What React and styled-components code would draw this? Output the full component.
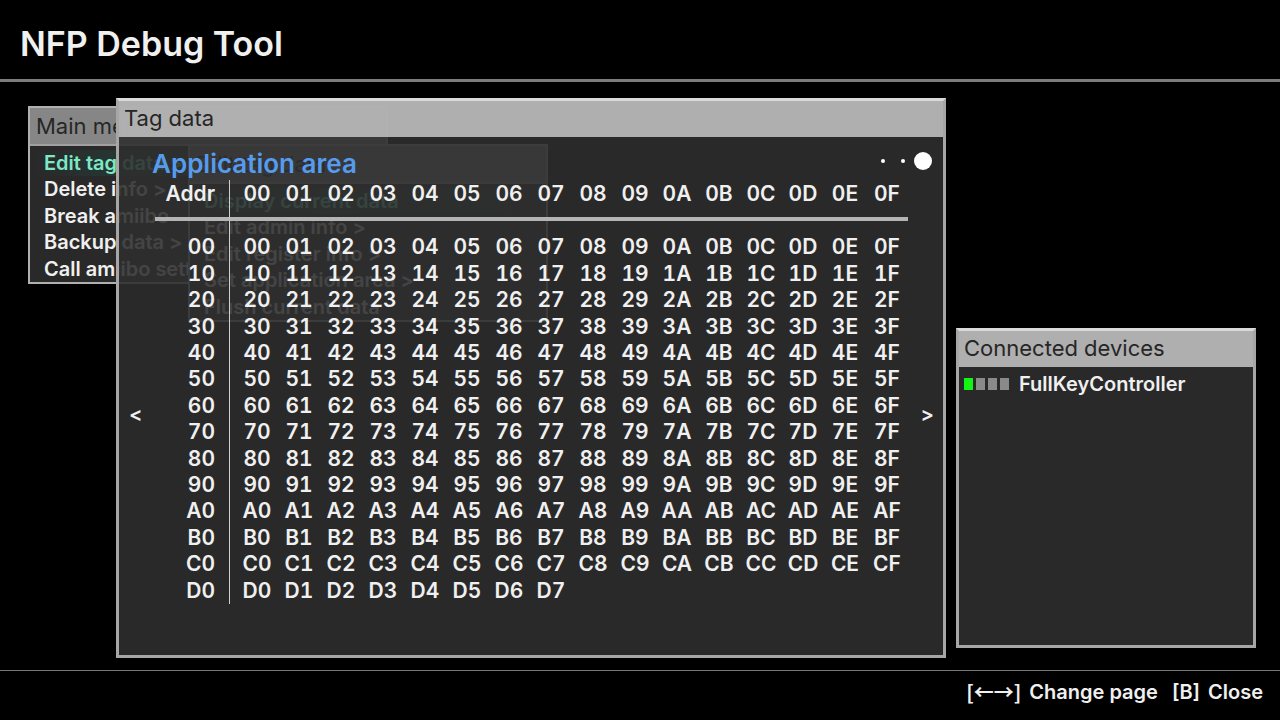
import React from "react";
import styled, { createGlobalStyle } from "styled-components";

const GlobalStyle = createGlobalStyle`
  *, *::before, *::after { box-sizing: border-box; }
  body {
    margin: 0;
    background: #000;
    color: #f0f0f0;
    font-family: Inter, "Noto Sans CJK JP", sans-serif;
    font-size: 20px;
    font-weight: 600;
    line-height: 26px;
  }
`;

const Screen = styled.div`
  min-height: 100vh;
  display: grid;
  grid-template-rows: auto 1fr auto;
`;

const AppHeader = styled.header`
  padding: 19px 20px 10px;
  border-bottom: 3px solid #7c7c7c;
`;

const AppTitle = styled.h1`
  margin: 0;
  font-size: 34px;
  font-weight: 600;
  line-height: 50px;
`;

const Desktop = styled.main`
  position: relative;
  display: flex;
  gap: 10px;
  padding: 16px 24px 12px 116px;
`;

const Panel = styled.section`
  display: flex;
  flex-direction: column;
  border: 3px solid #a6a6a6;
  border-top-color: #dadada;
  background: ${(p) => (p.$dim ? "#292929" : "rgba(46, 46, 46, 0.89)")};
  background-clip: padding-box;
`;

const MenuWindow = styled(Panel)`
  position: absolute;
  left: ${(p) => p.$left}px;
  top: ${(p) => p.$top}px;
  width: 360px;
  height: 178px;
  border-color: #b0b0b0;
  border-width: 2px;
`;

const TagWindow = styled(Panel)`
  position: relative;
  flex: 1;
`;

const DeviceWindow = styled(Panel)`
  position: relative;
  width: 300px;
  height: 320px;
  align-self: flex-end;
  margin-bottom: 10px;
`;

const PanelTitle = styled.h2`
  flex: none;
  height: 36px;
  margin: 0;
  padding: ${(p) => (p.$dim ? "4px 6px" : "3px 5px")};
  color: #262626;
  font-size: 22px;
  font-weight: 400;
  line-height: 28px;
  background: ${(p) => (p.$dim ? "#868686" : "rgba(190, 190, 190, 0.9)")};
`;

const MenuList = styled.ul`
  flex: 1;
  display: grid;
  grid-auto-rows: 1fr;
  margin: 0;
  padding: 4px 5px 0;
  border-top: 2px solid #a0a0a0;
  list-style: none;
`;

const MenuButton = styled.button`
  display: block;
  width: 100%;
  padding: 0 9px;
  border: 0;
  background: ${(p) => (p.$selected ? "linear-gradient(90deg, #292929, #23403a 40%, #292929)" : "none")};
  color: ${(p) => (p.$selected ? "#7ce8c6" : "#f0f0f0")};
  font: inherit;
  text-align: left;
  white-space: nowrap;
`;

const PageBar = styled.div`
  display: flex;
  align-items: center;
  justify-content: space-between;
  height: 43px;
  padding: 4px 11px 0 33px;
`;

const PageTitle = styled.h3`
  margin: 0;
  padding-top: 6px;
  color: #569bee;
  font-size: 26px;
  font-weight: 600;
  line-height: 32px;
`;

const Dots = styled.div`
  display: flex;
  align-items: center;
`;

const Dot = styled.span`
  width: ${(p) => (p.$current ? 18 : 4)}px;
  height: ${(p) => (p.$current ? 18 : 4)}px;
  margin-left: ${(p) => (p.$current ? 9 : 16)}px;
  border-radius: 50%;
  background: #fff;
`;

const PageBody = styled.div`
  flex: 1;
  display: grid;
  grid-template-columns: 36px 1fr 35px;
  align-items: start;
`;

const PageArrow = styled.button`
  align-self: center;
  padding: 0 9px 8px 10px;
  border: 0;
  background: none;
  color: #f0f0f0;
  font: inherit;
  text-align: ${(p) => p.$side};
`;

const HexTable = styled.table`
  width: 100%;
  table-layout: fixed;
  border-collapse: separate;
  border-spacing: 0;
  font-size: 21px;
  font-variant-numeric: tabular-nums;

  th, td { padding: 0; font-weight: 600; text-align: center; }
  th:first-child {
    padding-right: 14px;
    text-align: right;
    border-right: 1px solid #d0d0d0;
  }
  th:nth-child(2), td:nth-child(2) { padding-left: 6px; }
`;

const AddrCol = styled.col`
  width: 75px;
`;

const FirstCol = styled.col`
  width: 48px;
`;

const HeadRow = styled.tr`
  height: 41px;
  th { padding-bottom: 10px; border-bottom: 4px solid #b4b4b4; }
`;

const GapRow = styled.tr`
  height: 13px;
`;

const HexRow = styled.tr`
  height: ${(p) => (p.$tall ? 27 : 26)}px;
`;

const DeviceRow = styled.div`
  display: flex;
  align-items: center;
  gap: 10px;
  padding: 4px 5px;
`;

const Signal = styled.div`
  display: flex;
  gap: 3px;
`;

const SignalBar = styled.span`
  width: 9px;
  height: 12px;
  background: ${(p) => (p.$on ? "#14f514" : "#8a8a8a")};
`;

const KeyBar = styled.footer`
  display: flex;
  justify-content: flex-end;
  gap: 14px;
  height: 50px;
  padding: 8px 17px 0;
  border-top: 1px solid #787878;
`;

const KeyButton = styled.button`
  display: flex;
  gap: 8px;
  height: 26px;
  padding: 0;
  border: 0;
  background: none;
  color: #f0f0f0;
  font: inherit;
`;

const ArrowKeys = styled.kbd`
  font-family: "Noto Sans CJK JP", sans-serif;
  font-weight: 700;
`;

const Key = styled.kbd`
  font-family: inherit;
`;

const hex = (n) => n.toString(16).toUpperCase().padStart(2, "0");
const columns = Array.from({ length: 16 }, (_, i) => i);
const rows = Array.from({ length: 14 }, (_, i) => i * 16);
const byteCount = 216;

const mainMenu = ["Edit tag data >", "Delete info >", "Break amiibo", "Backup data >", "Call amiibo settings"];
const tagMenu = ["Display current data", "Edit admin info >", "Edit register info >", "Set application area >", "Flush current data"];

function Menu({ title, items, left, top }) {
  return (
    <MenuWindow $dim $left={left} $top={top}>
      <PanelTitle $dim>{title}</PanelTitle>
      <MenuList>
        {items.map((item, i) => (
          <li key={item}>
            <MenuButton $selected={i === 0}>{item}</MenuButton>
          </li>
        ))}
      </MenuList>
    </MenuWindow>
  );
}

export default function App() {
  return (
    <Screen>
      <GlobalStyle />
      <AppHeader>
        <AppTitle>NFP Debug Tool</AppTitle>
      </AppHeader>
      <Desktop>
        <Menu title="Main menu" items={mainMenu} left={28} top={24} />
        <Menu title="Edit tag data" items={tagMenu} left={188} top={62} />
        <TagWindow>
          <PanelTitle>Tag data</PanelTitle>
          <PageBar>
            <PageTitle>Application area</PageTitle>
            <Dots>
              <Dot />
              <Dot />
              <Dot $current />
            </Dots>
          </PageBar>
          <PageBody>
            <PageArrow $side="left" aria-label="Previous page">&lt;</PageArrow>
            <HexTable>
              <colgroup>
                <AddrCol />
                <FirstCol />
                {columns.slice(1).map((c) => <col key={c} />)}
              </colgroup>
              <thead>
                <HeadRow>
                  <th scope="col">Addr</th>
                  {columns.map((c) => <th key={c} scope="col">{hex(c)}</th>)}
                </HeadRow>
              </thead>
              <tbody>
                <GapRow aria-hidden="true"><th /></GapRow>
                {rows.map((r, i) => (
                  <HexRow key={r} $tall={i % 5 === 1 || i % 5 === 3}>
                    <th scope="row">{hex(r)}</th>
                    {columns.map((c) => (
                      <td key={c}>{r + c < byteCount ? hex(r + c) : ""}</td>
                    ))}
                  </HexRow>
                ))}
              </tbody>
            </HexTable>
            <PageArrow $side="right" aria-label="Next page">&gt;</PageArrow>
          </PageBody>
        </TagWindow>
        <DeviceWindow>
          <PanelTitle>Connected devices</PanelTitle>
          <DeviceRow>
            <Signal role="img" aria-label="Player 1">
              <SignalBar $on />
              <SignalBar />
              <SignalBar />
              <SignalBar />
            </Signal>
            <span>FullKeyController</span>
          </DeviceRow>
        </DeviceWindow>
      </Desktop>
      <KeyBar>
        <KeyButton><ArrowKeys>[←→]</ArrowKeys> Change page</KeyButton>
        <KeyButton><Key>[B]</Key> Close</KeyButton>
      </KeyBar>
    </Screen>
  );
}
